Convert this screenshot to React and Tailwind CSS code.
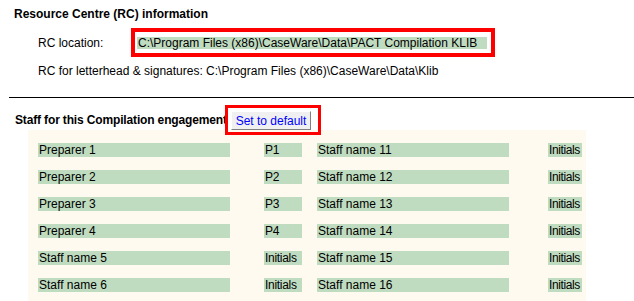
const rows = [
  ['Preparer 1', 'P1', 'Staff name 11', 'Initials'],
  ['Preparer 2', 'P2', 'Staff name 12', 'Initials'],
  ['Preparer 3', 'P3', 'Staff name 13', 'Initials'],
  ['Preparer 4', 'P4', 'Staff name 14', 'Initials'],
  ['Staff name 5', 'Initials', 'Staff name 15', 'Initials'],
  ['Staff name 6', 'Initials', 'Staff name 16', 'Initials'],
];

const Field = ({ w, children }) => (
  <div className={`${w} h-[14px] bg-[#c0dcc0] pl-px leading-[14px] whitespace-nowrap overflow-hidden`}>{children}</div>
);

export default function App() {
  return (
    <div className="w-[634px] h-[301px] bg-white text-black text-[12px] overflow-hidden" style={{ fontFamily: '"Liberation Sans", Arial, sans-serif' }}>
      {/* Resource centre */}
      <div className="pt-[7px] pl-[14px] font-bold leading-[14px]">Resource Centre (RC) information</div>
      <div className="flex items-center mt-[7px] pl-[38px] h-[29px]">
        <span className="w-[93px]">RC location:</span>
        <div className="border-4 border-[#ff0000] h-[29px] pl-[2px] pr-[4px] flex items-center">
          <div className="bg-[#c0dcc0] h-[12px] leading-[12px] pl-px pr-[10px] whitespace-nowrap">C:\Program Files (x86)\CaseWare\Data\PACT Compilation KLIB</div>
        </div>
      </div>
      <div className="pl-[38px] mt-[7px] leading-[14px]">RC for letterhead &amp; signatures: C:\Program Files (x86)\CaseWare\Data\Klib</div>

      <div className="ml-[9px] mt-[19px] h-px bg-black" />

      {/* Staff */}
      <div className="flex items-start mt-[7px] h-[25px]">
        <span className="shrink-0 pl-[15px] w-[225px] mt-[8px] font-bold whitespace-nowrap leading-[14px] tracking-[-0.15px]">Staff for this Compilation engagement</span>
        <div className="relative z-10 shrink-0 border-[3px] border-[#ff0000] w-[96px] h-[30px] pl-[3px] pt-[3px]">
          <button className="w-[80px] h-[19px] bg-[#f0f0f0] border border-t-white border-l-white border-r-[#808080] border-b-[#808080] text-[#0000ff] leading-[16px] text-[12px]">Set to default</button>
        </div>
      </div>

      <div className="ml-[28px] w-[558px] h-[200px] bg-[#fffaf0] pt-[13px] pl-[10px] flex flex-col gap-[13px]">
        {rows.map((r) => (
          <div key={r[0]} className="flex">
            <Field w="w-[192px]">{r[0]}</Field>
            <div className="w-[34px]" />
            <Field w="w-[38px] tracking-[-0.3px]">{r[1]}</Field>
            <div className="w-[15px]" />
            <Field w="w-[192px]">{r[2]}</Field>
            <div className="w-[39px]" />
            <Field w="w-[34px] tracking-[-0.4px]">{r[3]}</Field>
          </div>
        ))}
      </div>
    </div>
  );
}
